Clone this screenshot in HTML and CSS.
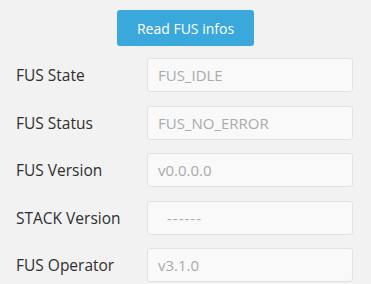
FILE: index.html
```html
<!DOCTYPE html>
<html>
<head>
<meta charset="utf-8">
<link rel="stylesheet" href="styles.css">
</head>
<body>
<div class="panel">
  <div class="actions">
    <button class="btn">Read FUS infos</button>
  </div>
  <div class="rows">
    <div class="row"><span class="label">FUS State</span><div class="field">FUS_IDLE</div></div>
    <div class="row"><span class="label">FUS Status</span><div class="field">FUS_NO_ERROR</div></div>
    <div class="row"><span class="label">FUS Version</span><div class="field">v0.0.0.0</div></div>
    <div class="row"><span class="label">STACK Version</span><div class="field field-dash">------</div></div>
    <div class="row"><span class="label">FUS Operator</span><div class="field">v3.1.0</div></div>
  </div>
</div>
</body>
</html>
```
FILE: styles.css
```css
html, body {
  margin: 0;
  padding: 0;
  background: #f2f2f2;
}
body {
  font-family: "Open Sans", "Noto Sans", sans-serif;
  font-size: 15px;
  width: 371px;
  height: 284px;
  overflow: hidden;
}
.panel {
  padding: 10px 18px 0 16px;
}
.actions {
  display: flex;
  justify-content: center;
  margin-left: -16px;
  margin-right: -18px;
}
.btn {
  width: 137px;
  height: 36px;
  border: none;
  border-radius: 3px;
  background: #3ba8dc;
  color: #ffffff;
  font-family: "Open Sans", "Noto Sans", sans-serif;
  font-size: 14px;
  padding: 0;
}
.rows {
  margin-top: 12px;
  display: flex;
  flex-direction: column;
  gap: 13.5px;
}
.row {
  display: flex;
  align-items: center;
  height: 34px;
}
.label {
  width: 131px;
  color: #2e2e2e;
  font-size: 15.5px;
}
.field {
  box-sizing: border-box;
  width: 206px;
  height: 34px;
  border: 1px solid #e2e2e2;
  border-radius: 3px;
  background: #f9f9f9;
  color: #aaaaaa;
  padding-left: 10px;
  display: flex;
  align-items: center;
}
.field-dash {
  padding-left: 19px;
  letter-spacing: 1px;
}
```
